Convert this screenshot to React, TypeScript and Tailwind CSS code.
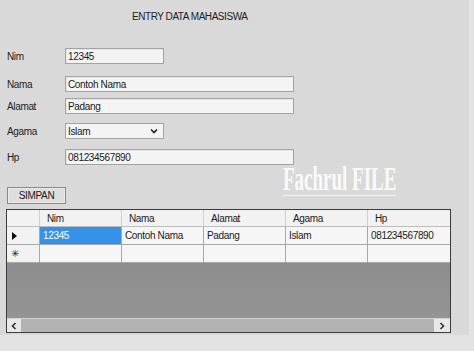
import React from "react";

const columns = ["Nim", "Nama", "Alamat", "Agama", "Hp"];
const row = ["12345", "Contoh Nama", "Padang", "Islam", "081234567890"];

// text box like the WinForms TextBox
const Field = ({ value, w }: { value: string; w: string }) => (
  <div
    className={`${w} h-[16px] border border-[#a3a3a3] bg-[#f4f4f4] pl-[2px] flex items-center text-[10px] tracking-[-0.35px] text-[#1a1a1a] shadow-[inset_1px_1px_0_#e6e6e6]`}
  >
    {value}
  </div>
);

const Label = ({ text }: { text: string }) => (
  <div className="w-[58px] text-[10px] tracking-[-0.35px] text-[#222]">{text}</div>
);

export default function App() {
  return (
    <div className="w-[474px] h-[351px] bg-[#e3e3e3] font-['Liberation_Sans',Arial,sans-serif] overflow-hidden">
      <div className="relative w-[469px] h-[335px] bg-[#d9d9d9] flex flex-col pl-[7px]">
        {/* Title */}
        <div className="mt-[11px] h-[11px] leading-[11px] pl-[125px] text-[10px] tracking-[-0.45px] text-[#1e1e1e]">
          ENTRY DATA MAHASISWA
        </div>

        {/* Form rows */}
        <div className="mt-[26px] flex items-center">
          <Label text="Nim" />
          <Field value="12345" w="w-[99px]" />
        </div>
        <div className="mt-[12px] flex items-center">
          <Label text="Nama" />
          <Field value="Contoh Nama" w="w-[229px]" />
        </div>
        <div className="mt-[6px] flex items-center">
          <Label text="Alamat" />
          <Field value="Padang" w="w-[229px]" />
        </div>
        <div className="mt-[9px] flex items-center">
          <Label text="Agama" />
          <div className="w-[99px] h-[16px] border border-[#a3a3a3] bg-[#f4f4f4] pl-[2px] pr-[5px] flex items-center justify-between text-[10px] tracking-[-0.35px] text-[#1a1a1a]">
            <span>Islam</span>
            <svg width="8" height="6" viewBox="0 0 8 6">
              <path d="M1 1.5 L4 4.5 L7 1.5" fill="none" stroke="#222" strokeWidth="1.6" />
            </svg>
          </div>
        </div>
        <div className="mt-[10px] flex items-center">
          <Label text="Hp" />
          <Field value="081234567890" w="w-[229px]" />
        </div>

        {/* Button */}
        <div className="mt-[22px] w-[59px] h-[17px] border border-[#7d8c99] bg-[#dedede] shadow-[inset_0_0_0_1px_#eaeaea] flex items-center justify-center text-[10px] tracking-[-0.35px] text-[#1a1a1a]">
          SIMPAN
        </div>

        {/* Watermark */}
        <div className="absolute left-[283px] top-[163px] w-max whitespace-nowrap origin-left scale-x-[0.575] font-['Liberation_Serif',serif] font-semibold text-[33px] leading-[32px] text-white/85 border-b border-white/70">
          Fachrul FILE
        </div>

        {/* DataGridView */}
        <div className="mt-[5px] -ml-[1px] w-[445px] h-[124px] border border-[#3a3a3a] flex flex-col bg-[#8f8f8f]">
          <div className="flex h-[17px] bg-[#f2f2f2] border-b border-[#bdbdbd]">
            <div className="w-[33px] border-r border-[#cfcfcf]" />
            {columns.map((c) => (
              <div
                key={c}
                className="w-[82px] border-r border-[#cfcfcf] last:border-r-0 pl-[7px] flex items-center text-[10px] tracking-[-0.35px] text-[#1a1a1a]"
              >
                {c}
              </div>
            ))}
          </div>
          <div className="flex h-[18px] border-b border-[#a8a8a8]">
            <div className="w-[33px] bg-[#f2f2f2] border-r border-[#a8a8a8] flex items-center pl-[5px]">
              <svg width="6" height="8" viewBox="0 0 6 8">
                <path d="M0 0 L5 4 L0 8 Z" fill="#111" />
              </svg>
            </div>
            {row.map((v, i) => (
              <div
                key={i}
                className={`w-[82px] border-r border-[#a8a8a8] last:border-r-0 pl-[3px] flex items-center text-[10px] tracking-[-0.35px] ${
                  i === 0 ? "bg-[#3592e8] text-white" : "bg-[#f6f6f6] text-[#1a1a1a]"
                }`}
              >
                {v}
              </div>
            ))}
          </div>
          <div className="flex h-[18px] border-b border-[#a8a8a8]">
            <div className="w-[33px] bg-[#f2f2f2] border-r border-[#a8a8a8] flex items-center pl-[4px] text-[10px] leading-none text-[#222]">
              ✳
            </div>
            {columns.map((c) => (
              <div key={c} className="w-[82px] bg-[#f6f6f6] border-r border-[#a8a8a8] last:border-r-0" />
            ))}
          </div>
          <div className="flex-1 bg-gradient-to-b from-[#8d8d8d] to-[#949494]" />
          {/* Horizontal scrollbar */}
          <div className="h-[14px] flex bg-[#b3b3b3] border-t border-[#d4d4d4]">
            <div className="w-[14px] bg-[#e8e8e8] flex items-center justify-center">
              <svg width="6" height="8" viewBox="0 0 6 8">
                <path d="M4.5 1 L1.5 4 L4.5 7" fill="none" stroke="#333" strokeWidth="1.6" />
              </svg>
            </div>
            <div className="flex-1" />
            <div className="w-[16px] bg-[#e8e8e8] flex items-center justify-center">
              <svg width="6" height="8" viewBox="0 0 6 8">
                <path d="M1.5 1 L4.5 4 L1.5 7" fill="none" stroke="#333" strokeWidth="1.6" />
              </svg>
            </div>
          </div>
        </div>
      </div>
    </div>
  );
}
